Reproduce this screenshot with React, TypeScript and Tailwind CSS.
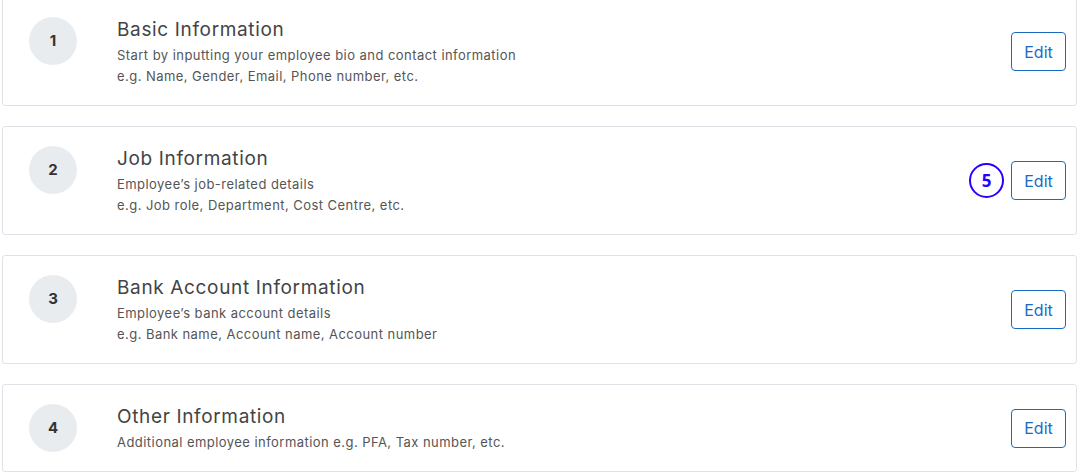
import React from "react";

const items = [
  { n: "1", title: "Basic Information", lines: ["Start by inputting your employee bio and contact information", "e.g. Name, Gender, Email, Phone number, etc."] },
  { n: "2", title: "Job Information", lines: ["Employee’s job-related details", "e.g. Job role, Department, Cost Centre, etc."], mark: true },
  { n: "3", title: "Bank Account Information", lines: ["Employee’s bank account details", "e.g. Bank name, Account name, Account number"] },
  { n: "4", title: "Other Information", lines: ["Additional employee information e.g. PFA, Tax number, etc."] },
];

export default function App() {
  return (
    <div className="w-[1080px] h-[475px] overflow-hidden bg-white pl-[2px] pr-[3px]" style={{ fontFamily: "Inter, 'Noto Sans', sans-serif" }}>
      <div className="-mt-[3px] flex flex-col gap-[20px]">
        {items.map((it) => (
          <div key={it.n} className="relative flex items-center justify-between border border-[#dfe3e8] rounded-[3px] pl-[26px] pr-[10px] pt-[19px] pb-[19px]">
            <div className="flex items-start">
              <div className="w-[48px] h-[48px] rounded-full bg-[#e9ecef] flex items-center justify-center text-[15px] font-bold text-[#333]">{it.n}</div>
              <div className="ml-[40px] mt-[1px]">
                <div className="text-[19px] leading-[24px] text-[#444] tracking-[0.65px]">{it.title}</div>
                <div className="mt-[3px] -mb-[1px]">
                  {it.lines.map((l) => (
                    <div key={l} className="text-[13px] leading-[21px] text-[#555] tracking-[0.45px]">{l}</div>
                  ))}
                </div>
              </div>
            </div>
            <div className="flex items-center">
              {it.mark && (
                <div className="mr-[7px] w-[35px] h-[35px] rounded-full border-2 border-[#2a00ff] flex items-center justify-center text-[#2a00ff] text-[17px] font-bold" style={{ fontFamily: "'Open Sans', sans-serif" }}>5</div>
              )}
              <button className="w-[55px] h-[39px] border border-[#1a6bbf] rounded-[4px] text-[#1a6bbf] text-[16px] bg-white">Edit</button>
            </div>
          </div>
        ))}
      </div>
    </div>
  );
}
